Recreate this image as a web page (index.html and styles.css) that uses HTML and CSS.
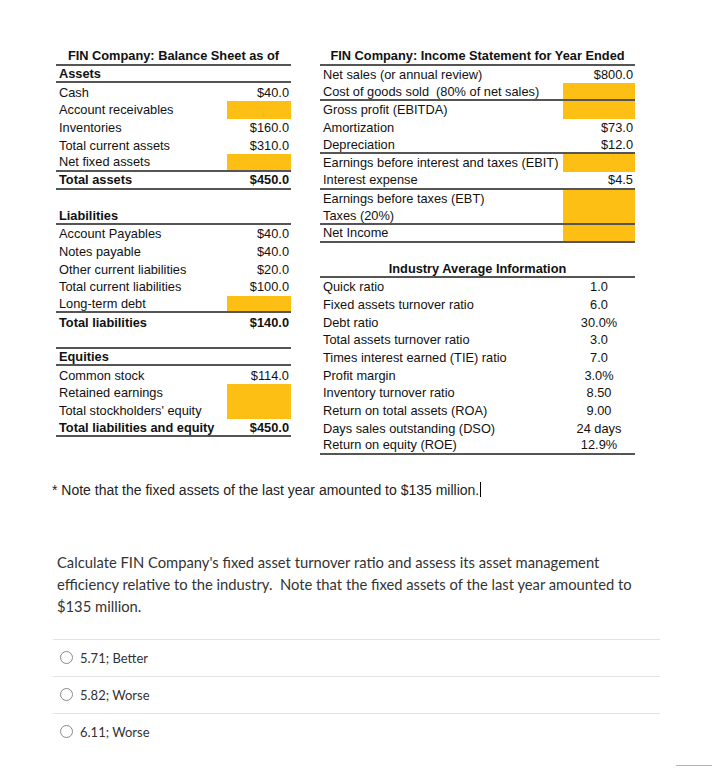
FILE: index.html
```html
<!DOCTYPE html>
<html>
<head>
<meta charset="utf-8">
<link rel="stylesheet" href="styles.css">
</head>
<body>
<div class="sheet">
  <div class="tbl left">
    <div class="row title ul">FIN Company: Balance Sheet as of</div>
    <div class="row b ul"><span class="lbl">Assets</span></div>
    <div class="row"><span class="lbl">Cash</span><span class="val">$40.0</span></div>
    <div class="row"><span class="lbl">Account receivables</span><span class="val hl"></span></div>
    <div class="row"><span class="lbl">Inventories</span><span class="val">$160.0</span></div>
    <div class="row"><span class="lbl">Total current assets</span><span class="val">$310.0</span></div>
    <div class="row ul"><span class="lbl">Net fixed assets</span><span class="val hl"></span></div>
    <div class="row b ul"><span class="lbl">Total assets</span><span class="val">$450.0</span></div>
    <div class="row"></div>
    <div class="row b ul"><span class="lbl">Liabilities</span></div>
    <div class="row"><span class="lbl">Account Payables</span><span class="val">$40.0</span></div>
    <div class="row"><span class="lbl">Notes payable</span><span class="val">$40.0</span></div>
    <div class="row"><span class="lbl">Other current liabilities</span><span class="val">$20.0</span></div>
    <div class="row"><span class="lbl">Total current liabilities</span><span class="val">$100.0</span></div>
    <div class="row ul"><span class="lbl">Long-term debt</span><span class="val hl"></span></div>
    <div class="row b"><span class="lbl">Total liabilities</span><span class="val">$140.0</span></div>
    <div class="row ul"></div>
    <div class="row b ul"><span class="lbl">Equities</span></div>
    <div class="row"><span class="lbl">Common stock</span><span class="val">$114.0</span></div>
    <div class="row"><span class="lbl">Retained earnings</span><span class="val hl"></span></div>
    <div class="row"><span class="lbl">Total stockholders' equity</span><span class="val hl"></span></div>
    <div class="row b ul"><span class="lbl">Total liabilities and equity</span><span class="val">$450.0</span></div>
  </div>
  <div class="tbl right">
    <div class="row title ul">FIN Company: Income Statement for Year Ended</div>
    <div class="row"><span class="lbl">Net sales (or annual review)</span><span class="val">$800.0</span></div>
    <div class="row ul"><span class="lbl">Cost of goods sold&nbsp; (80% of net sales)</span><span class="val hl"></span></div>
    <div class="row"><span class="lbl">Gross profit (EBITDA)</span><span class="val hl"></span></div>
    <div class="row"><span class="lbl">Amortization</span><span class="val">$73.0</span></div>
    <div class="row ul"><span class="lbl">Depreciation</span><span class="val">$12.0</span></div>
    <div class="row"><span class="lbl">Earnings before interest and taxes (EBIT)</span><span class="val hl"></span></div>
    <div class="row ul"><span class="lbl">Interest expense</span><span class="val">$4.5</span></div>
    <div class="row"><span class="lbl">Earnings before taxes (EBT)</span><span class="val hl"></span></div>
    <div class="row ul"><span class="lbl">Taxes (20%)</span><span class="val hl"></span></div>
    <div class="row ul"><span class="lbl">Net Income</span><span class="val hl"></span></div>
    <div class="row"></div>
    <div class="row title ul">Industry Average Information</div>
    <div class="row"><span class="lbl">Quick ratio</span><span class="val c">1.0</span></div>
    <div class="row"><span class="lbl">Fixed assets turnover ratio</span><span class="val c">6.0</span></div>
    <div class="row"><span class="lbl">Debt ratio</span><span class="val c">30.0%</span></div>
    <div class="row"><span class="lbl">Total assets turnover ratio</span><span class="val c">3.0</span></div>
    <div class="row"><span class="lbl">Times interest earned (TIE) ratio</span><span class="val c">7.0</span></div>
    <div class="row"><span class="lbl">Profit margin</span><span class="val c">3.0%</span></div>
    <div class="row"><span class="lbl">Inventory turnover ratio</span><span class="val c">8.50</span></div>
    <div class="row"><span class="lbl">Return on total assets (ROA)</span><span class="val c">9.00</span></div>
    <div class="row"><span class="lbl">Days sales outstanding (DSO)</span><span class="val c">24 days</span></div>
    <div class="row ul"><span class="lbl">Return on equity (ROE)</span><span class="val c">12.9%</span></div>
  </div>
</div>

<p class="note">* Note that the fixed assets of the last year amounted to $135 million.<span class="caret"></span></p>

<p class="question">Calculate FIN Company's fixed asset turnover ratio and assess its asset management efficiency relative to the industry.&nbsp; Note that the fixed assets of the last year amounted to $135 million.</p>

<div class="answers">
  <label class="answer"><span class="radio"></span>5.71; Better</label>
  <label class="answer"><span class="radio"></span>5.82; Worse</label>
  <label class="answer"><span class="radio"></span>6.11; Worse</label>
</div>

<div class="foot"><span class="bar"></span></div>
</body>
</html>
```

FILE: styles.css
```css
html, body {
  margin: 0;
  padding: 0;
  background: #fff;
}

body {
  font-family: "Liberation Sans", Arial, sans-serif;
  color: #111;
}

.sheet {
  display: flex;
  gap: 29px;
  padding: 48px 0 0 56px;
  align-items: flex-start;
}

.tbl {
  display: flex;
  flex-direction: column;
  font-size: 12.8px;
}

.left { width: 235px; }
.right { width: 315px; }

.row {
  height: 17.7px;
  box-sizing: border-box;
  display: flex;
  align-items: stretch;
  white-space: nowrap;
}

.row .lbl {
  flex: 1;
  padding-left: 3px;
  display: flex;
  align-items: center;
}

.row .val {
  display: flex;
  align-items: center;
  justify-content: flex-end;
  padding-right: 2px;
  box-sizing: border-box;
}

.left .val { width: 64px; }
.right .val { width: 72px; }

.row .val.c {
  justify-content: center;
  padding-right: 0;
}

.hl { background: #fdbf13; }

.b { font-weight: bold; }

.title {
  font-weight: bold;
  justify-content: center;
  align-items: center;
}

.ul { border-bottom: 2px solid #555; }

.note {
  margin: 27px 0 0 52px;
  font-size: 14px;
  line-height: 16px;
  color: #222;
  display: flex;
  align-items: center;
}

.caret {
  display: inline-block;
  width: 1px;
  height: 15px;
  background: #000;
  margin-left: 1px;
}

.question {
  margin: 53px 0 0 57px;
  width: 600px;
  font-family: Lato, "Liberation Sans", sans-serif;
  font-size: 14.75px;
  line-height: 22px;
  color: #333;
}

.answers {
  margin: 22px 0 0 53px;
  width: 607px;
  display: flex;
  flex-direction: column;
}

.answer {
  height: 37px;
  box-sizing: border-box;
  border-top: 1px solid #e3e3e3;
  display: flex;
  align-items: center;
  padding-left: 7px;
  gap: 7px;
  font-family: Lato, "Liberation Sans", sans-serif;
  font-size: 13px;
  color: #333;
}

.radio {
  width: 11px;
  height: 11px;
  border: 1px solid #8a8a8a;
  border-radius: 50%;
  box-sizing: content-box;
}

.foot {
  display: flex;
  justify-content: flex-end;
  padding: 15px 4px 0 0;
}

.bar {
  width: 36px;
  height: 1px;
  background: #b5b5b5;
}
```
